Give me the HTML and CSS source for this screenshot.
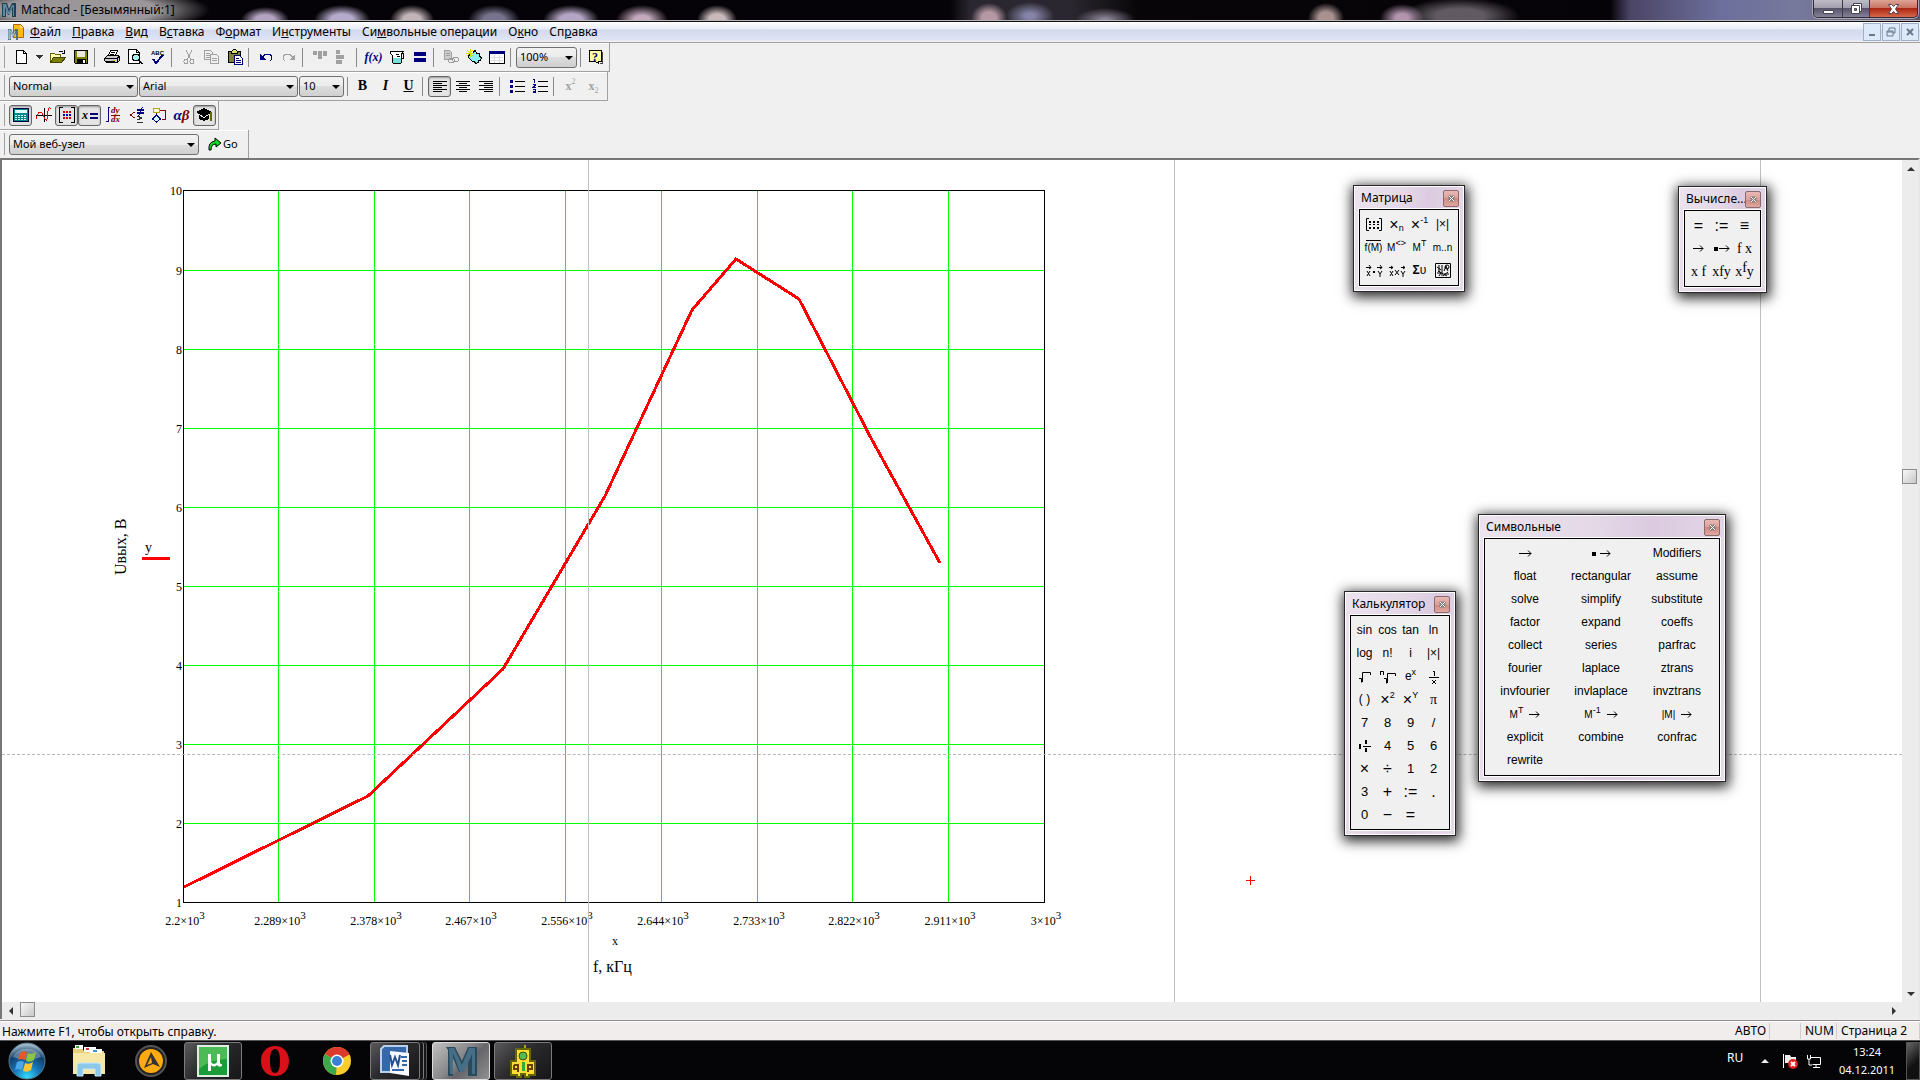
FILE: index.html
```html
<!DOCTYPE html>
<html lang="ru">
<head>
<meta charset="utf-8">
<title>Mathcad - [Безымянный:1]</title>
<link rel="stylesheet" href="styles.css">
</head>
<body>
<header class="titlebar">
  <svg class="app-icon" width="16" height="16" viewBox="0 0 16 16"><path d="M1 1h5l2 6 3-6h4v14h-4V7l-3 6H7L5 7v8H1z" fill="#1d3f52"/><path d="M2 2h3l3 8 3-7h2v11h-1V4l-3 8H7L4 5v9H2z" fill="#5d8ba4"/></svg>
  <h1 class="title">Mathcad - [Безымянный:1]</h1>
  <div class="win-controls">
    <button class="wc wc-min" aria-label="Свернуть"><svg width="13" height="12"><path d="M1.500 7.500h10v3h-10z" fill="#fff" stroke="#445"/></svg></button>
    <button class="wc wc-max" aria-label="Развернуть"><svg width="13" height="13"><path d="M3.500 1.500h8v8h-8z" fill="#fff" stroke="#445"/><path d="M1.500 3.500h8v8h-8z" fill="#fff" stroke="#445"/><path d="M4.500 6.500h2v2h-2z" fill="#889" stroke="#445"/></svg></button>
    <button class="wc wc-close" aria-label="Закрыть"><svg width="13" height="12"><path d="M1.500 1.500h3l2 2 2-2h3l-3 4.500 3 4.500h-3l-2-2-2 2h-3l3-4.500z" fill="#fff" stroke="#545"/></svg></button>
  </div>
</header>

<nav class="menubar">
  <svg class="doc-icon" width="16" height="16" viewBox="0 0 16 16"><path d="M5.500.5h7l3 3v10h-10z" fill="#fb1" stroke="#a60"/><path d="M12 1v3h3" fill="#ffe9a0"/><path d="M0 5h3l2 4 2-4h3v11H8V9l-3 5-2-5v7H0z" fill="#4d7186"/><path d="M1 6l1 0v9H1zM3 7l2 5 2-5" stroke="#b5cad6" fill="none"/></svg>
  <button><u>Ф</u>айл</button>
  <button><u>П</u>равка</button>
  <button><u>В</u>ид</button>
  <button>В<u>с</u>тавка</button>
  <button>Ф<u>о</u>рмат</button>
  <button>И<u>н</u>струменты</button>
  <button>Си<u>м</u>вольные операции</button>
  <button>О<u>к</u>но</button>
  <button>Сп<u>р</u>авка</button>
  <div class="mdi-controls">
    <button aria-label="Свернуть документ"><svg width="10" height="10"><path d="M2 7h6v2H2z" fill="#66788c"/></svg></button>
    <button aria-label="Восстановить документ"><svg width="10" height="10"><path d="M3 4V1h6v5H7M1 4h6v5H1zM1 5h6" fill="none" stroke="#66788c"/></svg></button>
    <button aria-label="Закрыть документ"><svg width="10" height="10"><path d="M2 2l6 6M8 2l-6 6" stroke="#66788c" stroke-width="2"/></svg></button>
  </div>
</nav>

<div class="bars">
<div class="bar bar-standard">
  <button class="tb" aria-label="Создать"><svg width="16" height="16"><path d="M3.500 1.500h7l3 3v10h-10z" fill="#fff" stroke="#000"/><path d="M10.500 1.500v3h3" fill="none" stroke="#000"/></svg></button>
  <button class="tb tb-drop" aria-label="Шаблоны"><svg width="8" height="5"><path d="M0 0h8L4 4z" fill="#333"/></svg></button>
  <button class="tb" aria-label="Открыть"><svg width="16" height="16"><path d="M.5 13.500v-9h4l1 1h5v3" fill="#ffffb0" stroke="#660"/><path d="M.5 13.500l3-5h12l-4 5z" fill="#808000" stroke="#440"/><path d="M8.500 3.500q3-3 5 0M14.500 1v3h-3" fill="none" stroke="#000"/></svg></button>
  <button class="tb" aria-label="Сохранить"><svg width="16" height="16"><path d="M1.500 1.500h13v13h-12l-1-1z" fill="#808000" stroke="#000"/><path d="M4 2h8v6H4z" fill="#e8e8e0"/><path d="M4 10h9v5H4z" fill="#000"/><path d="M10 11h2v3h-2z" fill="#fff"/></svg></button>
  <i class="sep"></i>
  <button class="tb" aria-label="Печать"><svg width="16" height="16"><path d="M4.500 6.500l2-5h7l-2 5" fill="#fff" stroke="#000"/><path d="M.5 9.500l3-3h11l1 1v4l-2 2h-11l-2-2z" fill="#ccc" stroke="#000"/><path d="M1 9.500h12l2-2M13 10v3M7 3.500h4M6 5h4M2 12h9" fill="none" stroke="#000"/><path d="M9 11h2v1H9z" fill="#cc0"/></svg></button>
  <button class="tb" aria-label="Просмотр"><svg width="16" height="16"><path d="M1.500.5h8l3 3v11h-11z" fill="#fff" stroke="#000"/><path d="M9.500.5v3h3" fill="none" stroke="#000"/><circle cx="9" cy="8.500" r="3.500" fill="#aee" stroke="#000"/><path d="M11.500 11l4 4" stroke="#000" stroke-width="2"/></svg></button>
  <button class="tb" aria-label="Орфография"><svg width="16" height="16"><text x="1" y="6" class="abc">ABC</text><path d="M3 10l3 4 7-8" fill="none" stroke="#000080" stroke-width="2"/></svg></button>
  <i class="sep"></i>
  <button class="tb" aria-label="Вырезать" disabled><svg width="16" height="16"><path d="M5 1l5 10M11 1L6 11" stroke="#a0a0a0"/><circle cx="5" cy="12.500" r="2" fill="none" stroke="#a0a0a0"/><circle cx="11" cy="12.500" r="2" fill="none" stroke="#a0a0a0"/></svg></button>
  <button class="tb" aria-label="Копировать" disabled><svg width="16" height="16"><path d="M.5 1.500h6l2 2v7h-8zM2 4.500h4M2 6.500h4M2 8.500h4" fill="none" stroke="#a0a0a0"/><path d="M6.500 5.500h6l2 2v7h-8zM8 9.500h5M8 11.500h5" fill="#f0f0f0" stroke="#a0a0a0"/></svg></button>
  <button class="tb" aria-label="Вставить"><svg width="16" height="16"><path d="M1.500 2.500h12v11h-12z" fill="#808040" stroke="#000"/><path d="M4.500 4.500v-2l2-2h2l2 2v2z" fill="#dd6" stroke="#000"/><path d="M7.500 6.500h5l3 3v6h-8z" fill="#fff" stroke="#000080"/><path d="M9 9.500h3M9 11.500h5M9 13.500h5" stroke="#000080"/></svg></button>
  <i class="sep"></i>
  <button class="tb" aria-label="Отменить"><svg width="16" height="16"><path d="M4 9q2-4 6-4t4 5l-2 2" fill="none" stroke="#000080" stroke-width="1"/><path d="M2 5v6h6z" fill="#000080"/></svg></button>
  <button class="tb" aria-label="Повторить" disabled><svg width="16" height="16"><path d="M12 9q-2-4-6-4t-4 5l2 2" fill="none" stroke="#a0a0a0"/><path d="M14 5v6H8z" fill="#a0a0a0"/></svg></button>
  <i class="sep"></i>
  <button class="tb" aria-label="Выровнять по горизонтали" disabled><svg width="16" height="16"><path d="M1 2h4v4H1zM6 2h4v8H6zM11 2h4v5h-4z" fill="#a0a0a0"/></svg></button>
  <button class="tb" aria-label="Выровнять по вертикали" disabled><svg width="16" height="16"><path d="M1 1h4v4H1zM1 6h8v4H1zM1 11h6v4H1z" fill="#a0a0a0"/></svg></button>
  <i class="sep"></i>
  <button class="tb fx" aria-label="Вставить функцию">f(x)</button>
  <button class="tb" aria-label="Вставить единицы"><svg width="16" height="16"><path d="M1.500 2.500h13l-2 3v8l-2 1h-6l-1-1v-7l-2-2z" fill="#fff" stroke="#000"/><path d="M4 9h8v5H4z" fill="#7dd"/><path d="M7 5.500h3M8 7.500h3M12 4.500h2v5h-2" fill="none" stroke="#000"/></svg></button>
  <button class="tb" aria-label="Вычислить"><svg width="16" height="16"><path d="M2 3h12v4H2zM2 9h12v4H2z" fill="#000080"/></svg></button>
  <i class="sep"></i>
  <button class="tb" aria-label="Гиперссылка" disabled><svg width="16" height="16"><path d="M1.500 1.500h5l2 2v7h-7zM3 4.500h4M3 6.500h4" fill="#ccc" stroke="#a0a0a0"/><rect x="5.500" y="9.500" width="6" height="4" rx="2" fill="none" stroke="#999" /><rect x="9.500" y="8.500" width="6" height="4" rx="2" fill="none" stroke="#999"/></svg></button>
  <button class="tb" aria-label="Компонент"><svg width="16" height="16"><path d="M3.500 4.500h4v-2l2-1 1 3h3v3l2 1-1 3h-2v2l-3 1-1-2h-2l-4-4z" fill="#8ee" stroke="#000"/><path d="M1 1l6 6M4.500 0v8M0 4.500h8M7 1L1 7" stroke="#dd0" stroke-width="1"/></svg></button>
  <button class="tb" aria-label="Ресурсы"><svg width="16" height="16"><path d="M.5 2.500h15v12H.5z" fill="#fff" stroke="#000"/><path d="M0 2h16v3H0z" fill="#000080"/><path d="M5.500 6v8M10.500 6v8M2 8.500h12M2 11.500h12" stroke="#ddd"/></svg></button>
  <i class="sep"></i>
  <label class="combo combo-zoom"><select aria-label="Масштаб"><option>100%</option></select></label>
  <i class="sep sep-thin"></i>
  <button class="tb" aria-label="Справка"><svg width="16" height="16"><path d="M1.500 1.500h12v11h-3v2l-3-2h-6z" fill="#ffffa0" stroke="#000"/><path d="M14.500 3v11h-3" fill="none" stroke="#444"/><text x="4" y="12" class="qm">?</text></svg></button>
</div>

<div class="bar bar-format">
  <label class="combo combo-style"><select aria-label="Стиль"><option>Normal</option></select></label>
  <label class="combo combo-font"><select aria-label="Шрифт"><option>Arial</option></select></label>
  <label class="combo combo-size"><select aria-label="Размер"><option>10</option></select></label>
  <i class="sep sep-thin"></i>
  <button class="tb letter"><b>B</b></button>
  <button class="tb letter"><em>I</em></button>
  <button class="tb letter"><u>U</u></button>
  <i class="sep"></i>
  <button class="tb pressed" aria-label="По левому краю"><svg width="16" height="14"><path d="M1 2.500h14M1 4.500h9M1 6.500h14M1 8.500h9M1 10.500h14M1 12.500h9" stroke="#000"/></svg></button>
  <button class="tb" aria-label="По центру"><svg width="16" height="14"><path d="M1 2.500h14M4 4.500h8M1 6.500h14M4 8.500h8M1 10.500h14M4 12.500h8" stroke="#000"/></svg></button>
  <button class="tb" aria-label="По правому краю"><svg width="16" height="14"><path d="M1 2.500h14M6 4.500h9M1 6.500h14M6 8.500h9M1 10.500h14M6 12.500h9" stroke="#000"/></svg></button>
  <i class="sep"></i>
  <button class="tb" aria-label="Маркеры"><svg width="16" height="14"><path d="M1 1h3v3H1zM1 6h3v3H1zM1 11h3v3H1z" fill="#000080"/><path d="M6 2.500h10M6 7.500h10M6 12.500h10" stroke="#000"/></svg></button>
  <button class="tb" aria-label="Нумерация"><svg width="16" height="14"><path d="M1 .5h1.500v3.500M1 5.500h2v1L1 8.500h2.500M1 10.500h2v3H1M1 12h2" fill="none" stroke="#000080"/><path d="M6 2.500h10M6 7.500h10M6 12.500h10" stroke="#000"/></svg></button>
  <i class="sep"></i>
  <button class="tb script" disabled><b>x</b><sup>2</sup></button>
  <button class="tb script" disabled><b>x</b><sub>2</sub></button>
</div>

<div class="bar bar-math">
  <button class="tb pressed" aria-label="Калькулятор"><svg width="16" height="16"><path d="M.5 1.500h15v13H.5z" fill="#088" stroke="#000040"/><path d="M2 3h12v3H2z" fill="#dff"/><path d="M2 8.500h12M2 10.500h12M2 12.500h12" stroke="#cff" stroke-dasharray="2 1"/></svg></button>
  <button class="tb" aria-label="График"><svg width="16" height="16"><path d="M0 8.500h16M8.500 1v14" stroke="#000"/><path d="M0 12q2-7 4-7t4 5 3 2 1-8 3-2" fill="none" stroke="#e00"/></svg></button>
  <button class="tb pressed" aria-label="Матрица"><svg width="16" height="16"><path d="M4 .5H.5v15H4M12 .5h3.500v15H12" fill="none" stroke="#000"/><path d="M4 4h2v2H4zM7 4h2v2H7zM10 4h2v2h-2zM4 10h2v2H4zM7 10h2v2H7zM10 10h2v2h-2z" fill="#c00"/><path d="M4 7h2v2H4zM7 7h2v2H7zM10 7h2v2h-2z" fill="#00a"/></svg></button>
  <button class="tb pressed" aria-label="Вычисление"><svg width="16" height="16"><text x="0" y="12" class="xeq">x</text><path d="M8 6h8v2H8zM8 10h8v2H8z" fill="#000080"/></svg></button>
  <button class="tb" aria-label="Матанализ"><svg width="16" height="16"><path d="M5 .5H3.500v14H1" fill="none" stroke="#000080" stroke-width="1"/><path d="M6 8.500h9" stroke="#800000"/><text x="6" y="6" class="dy">dy</text><text x="6" y="15" class="dy">dx</text></svg></button>
  <button class="tb" aria-label="Булева"><svg width="16" height="16"><path d="M7 5L2 8l5 3" fill="none" stroke="#800000" stroke-width="1"/><path d="M9 2h7v2H9zM9 5h7v2H9zM14 0h1l-4 9h-1z" fill="#000080"/><path d="M9 9l5 2-5 2M9 15.500h6" fill="none" stroke="#333"/></svg></button>
  <button class="tb" aria-label="Программирование"><svg width="16" height="16"><path d="M2.500 1.500h6v4h-6z" fill="#ffc" stroke="#aa0"/><path d="M5.500 6v3M9 3.500h5.500v9H11" fill="none" stroke="#800000"/><path d="M5.500 8l4 4-4 3-4-3z" fill="#cff" stroke="#008"/></svg></button>
  <button class="tb greek" aria-label="Греческие"><span class="alpha">α</span><span class="beta">β</span></button>
  <button class="tb pressed" aria-label="Символьные"><svg width="18" height="16"><path d="M0 5l8-4 8 4-8 5z" fill="#000"/><path d="M3 8l5 3 5-3v4l-5 2-5-2z" fill="#000"/><path d="M14.500 5v9" stroke="#660" stroke-width="2"/></svg></button>
</div>

<div class="bar bar-web">
  <label class="combo combo-url"><select aria-label="Адрес"><option>Мой веб-узел</option></select></label>
  <button class="go"><svg width="14" height="14"><path d="M1 13q-1-8 6-9V1l6 5-5 4V7Q3 7 3 13z" fill="#1d2" stroke="#000"/></svg>Go</button>
</div>
</div>

<main class="work">
  <section class="canvas">
    <svg class="chart" width="1070" height="830" viewBox="2 160 1070 830">
      <g class="grid">
        <path d="M278.500 191v711M374.500 191v711M469.500 191v711M565.500 191v711M661.500 191v711M757.500 191v711M852.500 191v711M948.500 191v711"/>
        <path d="M184 270.500h860M184 349.500h860M184 428.500h860M184 507.500h860M184 586.500h860M184 665.500h860M184 744.500h860M184 823.500h860"/>
      </g>
      <rect class="frame" x="183.500" y="190.500" width="861" height="712"/>
      <polyline class="curve" points="184,887 368,796 503,669 605,496 692,310 736,259 799,299 872,440 940,563"/>
      <g class="ticks-y">
        <text x="182" y="195">10</text><text x="182" y="275">9</text><text x="182" y="354">8</text><text x="182" y="433">7</text><text x="182" y="512">6</text><text x="182" y="591">5</text><text x="182" y="670">4</text><text x="182" y="749">3</text><text x="182" y="828">2</text><text x="182" y="907">1</text>
      </g>
      <g class="ticks-x">
        <text x="185" y="925">2.2×10<tspan dy="-6">3</tspan></text>
        <text x="280" y="925">2.289×10<tspan dy="-6">3</tspan></text>
        <text x="376" y="925">2.378×10<tspan dy="-6">3</tspan></text>
        <text x="471" y="925">2.467×10<tspan dy="-6">3</tspan></text>
        <text x="567" y="925">2.556×10<tspan dy="-6">3</tspan></text>
        <text x="663" y="925">2.644×10<tspan dy="-6">3</tspan></text>
        <text x="759" y="925">2.733×10<tspan dy="-6">3</tspan></text>
        <text x="854" y="925">2.822×10<tspan dy="-6">3</tspan></text>
        <text x="950" y="925">2.911×10<tspan dy="-6">3</tspan></text>
        <text x="1046" y="925">3×10<tspan dy="-6">3</tspan></text>
        <text x="615" y="945">x</text>
      </g>
      <text class="axis" x="593" y="972">f, кГц</text>
      <text class="axis" transform="translate(126 575) rotate(-90)">Uвых, В</text>
      <text class="axis-var" x="145" y="552">y</text>
      <path class="legend" d="M142 558.500h28"/>
    </svg>
    <i class="vline vline-a"></i><i class="vline vline-b"></i><i class="vline vline-c"></i>
    <i class="hline"></i>
    <svg class="cursor" width="9" height="9"><path d="M4.500 0v9M0 4.500h9" stroke="#f00"/></svg>

    <section class="palette p-matrix">
      <header><h2>Матрица</h2><button class="x" aria-label="Закрыть"><svg width="7" height="7"><path d="M1 1l5 5M6 1L1 6" stroke="#777" stroke-width="3"/><path d="M1 1l5 5M6 1L1 6" stroke="#fff"/></svg></button></header>
      <div class="keys four">
        <button aria-label="Матрица или вектор"><svg width="16" height="16"><path d="M3 1.500H.5v12H3M13 1.500h2.500v12H13" fill="none" stroke="#000"/><path d="M3 4h2v2H3zM7 4h2v2H7zM11 4h2v2h-2zM3 7h2v1H3zM7 7h2v1H7zM11 7h2v1h-2zM3 10h2v2H3zM7 10h2v2H7zM11 10h2v2h-2z"/></svg></button>
        <button><span class="op">×</span><sub>n</sub></button>
        <button><span class="op">×</span><sup>-1</sup></button>
        <button>|×|</button>
        <button class="vec">f(M)</button>
        <button class="small">M<sup>&lt;&gt;</sup></button>
        <button class="small">M<sup>T</sup></button>
        <button class="small">m..n</button>
        <button aria-label="Скалярное произведение"><svg width="16" height="12"><path d="M0 2.500h5M3 0l2 2.500L3 4M1 6l3 5M4 6l-3 5M11 2.500h5M14 0l2 2.500L14 4M12 6l2 3 2-3M14 9v3" fill="none" stroke="#000"/><path d="M7 6h2v2H7z"/></svg></button>
        <button aria-label="Векторное произведение"><svg width="16" height="12"><path d="M0 2.500h4M2 1l2 1.500L2 4M1 6l3 5M4 6l-3 5M6 5l4 5M10 5l-4 5M12 2.500h4M14 1l2 1.500L14 4M12 6l2 3 2-3M14 9v3" fill="none" stroke="#000"/></svg></button>
        <button><b>Σ</b>υ</button>
        <button aria-label="Рисунок"><svg width="16" height="16"><path d="M.5.500h15v14H.5z" fill="none" stroke="#000"/><path d="M4 2v7M2 4l4 3M7 2v11M2 10h4l-2 3M9 8l2-5 2 5M9 11h5M8 13l5-4M3 8l9 5" fill="none" stroke="#000"/><circle cx="12" cy="4" r="2" fill="none" stroke="#000"/></svg></button>
      </div>
    </section>

    <section class="palette p-eval">
      <header><h2>Вычисле...</h2><button class="x" aria-label="Закрыть"><svg width="7" height="7"><path d="M1 1l5 5M6 1L1 6" stroke="#777" stroke-width="3"/><path d="M1 1l5 5M6 1L1 6" stroke="#fff"/></svg></button></header>
      <div class="keys three">
        <button class="op">=</button><button class="op">:=</button><button class="op">≡</button>
        <button aria-label="Символьно"><svg class="arrow" width="11" height="7"><path d="M0 3.500h10M7 .5l3 3-3 3"/></svg></button>
        <button aria-label="Символьно с ключом"><svg class="arrow" width="16" height="7"><path d="M4 2v4H0V2z" class="dot"/><path d="M5 3.500h10M12 .5l3 3-3 3"/></svg></button>
        <button class="serif">f x</button>
        <button class="serif">x f</button><button class="serif">xfy</button><button class="serif">x<sup>f</sup>y</button>
      </div>
    </section>

    <section class="palette p-calc">
      <header><h2>Калькулятор</h2><button class="x" aria-label="Закрыть"><svg width="7" height="7"><path d="M1 1l5 5M6 1L1 6" stroke="#777" stroke-width="3"/><path d="M1 1l5 5M6 1L1 6" stroke="#fff"/></svg></button></header>
      <div class="keys four">
        <button>sin</button><button>cos</button><button>tan</button><button>ln</button>
        <button>log</button><button>n!</button><button>i</button><button>|×|</button>
        <button aria-label="Корень"><svg width="12" height="12"><path d="M0 7.500h2.500v4M3.500 11V1.500h8V4" fill="none" stroke="#000"/></svg></button>
        <button aria-label="Корень степени n"><svg width="16" height="14"><path d="M.5 5V1M1 1.500h2.500V5M4 8.500h2.500v5M7.500 13V3.500h8V6" fill="none" stroke="#000"/></svg></button>
        <button>e<sup>x</sup></button>
        <button aria-label="Обратное"><svg width="10" height="16"><path d="M0 8.500h10M4 2.500h1.500V7M3 11l4 4M7 11l-4 4" fill="none" stroke="#000"/></svg></button>
        <button>( )</button><button><span class="op">×</span><sup>2</sup></button><button><span class="op">×</span><sup>Y</sup></button><button class="serif">π</button>
        <button class="digit">7</button><button class="digit">8</button><button class="digit">9</button><button class="digit">/</button>
        <button aria-label="Смешанное число"><svg width="12" height="14"><path d="M0 5h2v5H0zM6 1h2v4H6zM6 9h2v4H6z"/><path d="M4 7.500h8" stroke="#000"/></svg></button><button class="digit">4</button><button class="digit">5</button><button class="digit">6</button>
        <button class="op">×</button><button class="op">÷</button><button class="digit">1</button><button class="digit">2</button>
        <button class="digit">3</button><button class="op">+</button><button class="op">:=</button><button class="op">.</button>
        <button class="digit">0</button><button class="op">−</button><button class="op">=</button>
      </div>
    </section>

    <section class="palette p-symbolic">
      <header><h2>Символьные</h2><button class="x" aria-label="Закрыть"><svg width="7" height="7"><path d="M1 1l5 5M6 1L1 6" stroke="#777" stroke-width="3"/><path d="M1 1l5 5M6 1L1 6" stroke="#fff"/></svg></button></header>
      <div class="keys wide">
        <button aria-label="Символьно"><svg class="arrow" width="13" height="7"><path d="M0 3.500h12M9 .5l3 3-3 3"/></svg></button>
        <button aria-label="Символьно с ключом"><svg class="arrow" width="19" height="7"><path d="M4 2v4H0V2z" class="dot"/><path d="M8 3.500h10M15 .5l3 3-3 3"/></svg></button>
        <button>Modifiers</button>
        <button>float</button><button>rectangular</button><button>assume</button>
        <button>solve</button><button>simplify</button><button>substitute</button>
        <button>factor</button><button>expand</button><button>coeffs</button>
        <button>collect</button><button>series</button><button>parfrac</button>
        <button>fourier</button><button>laplace</button><button>ztrans</button>
        <button>invfourier</button><button>invlaplace</button><button>invztrans</button>
        <button class="small">M<sup>T</sup><svg class="arrow gap" width="11" height="7"><path d="M0 3.500h10M7 .5l3 3-3 3"/></svg></button>
        <button class="small">M<sup>-1</sup><svg class="arrow gap" width="11" height="7"><path d="M0 3.500h10M7 .5l3 3-3 3"/></svg></button>
        <button class="small">|M|<svg class="arrow gap" width="11" height="7"><path d="M0 3.500h10M7 .5l3 3-3 3"/></svg></button>
        <button>explicit</button><button>combine</button><button>confrac</button>
        <button>rewrite</button>
      </div>
    </section>
  </section>
  <div class="vscroll">
    <button aria-label="Вверх"><svg width="8" height="4"><path d="M0 4l4-4 4 4z" fill="#333"/></svg></button>
    <i class="before"></i><i class="thumb"></i><i class="after"></i>
    <button aria-label="Вниз"><svg width="8" height="4"><path d="M0 0l4 4 4-4z" fill="#333"/></svg></button>
  </div>
  <div class="hscroll">
    <button aria-label="Влево"><svg width="4" height="8"><path d="M4 0L0 4l4 4z" fill="#333"/></svg></button>
    <i class="thumb"></i><i class="after"></i>
    <button aria-label="Вправо"><svg width="4" height="8"><path d="M0 0l4 4-4 4z" fill="#333"/></svg></button>
  </div>
  <i class="corner"></i>
</main>

<footer class="status">
  <span class="hint">Нажмите F1, чтобы открыть справку.</span>
  <span class="cell cell-auto">АВТО</span><span class="cell cell-caps"></span><span class="cell cell-num">NUM</span><span class="cell cell-page">Страница 2</span>
</footer>

<div class="taskbar">
  <button class="start" aria-label="Пуск"><svg width="38" height="38" viewBox="0 0 38 38"><defs><radialGradient id="orb" cx=".5" cy=".95" r=".9"><stop offset="0" stop-color="#3df"/><stop offset=".4" stop-color="#1676b8"/><stop offset=".75" stop-color="#12406c"/><stop offset="1" stop-color="#9fb8c8"/></radialGradient></defs><circle cx="19" cy="19" r="18" fill="url(#orb)" stroke="#5b7b90"/><path d="M5 15a15 13 0 0 1 28 0q-14 5-28 0z" fill="#fff" opacity=".3"/><path d="M12 11q4-3 7-1l-2 8q-4-2-7 0z" fill="#e8572a"/><path d="M20 11q4 2 8-1l-2 8q-4 3-8 1z" fill="#8cc63e"/><path d="M9 20q4-2 7 0l-2 8q-4-2-7 0z" fill="#4aa8e8"/><path d="M17 21q4 2 8-1l-2 8q-4 3-8 1z" fill="#fdc52e"/></svg></button>
  <button class="task" aria-label="Проводник"><svg width="34" height="34"><path d="M1 4h9l2 3h20v23H1z" fill="#e7cf7a"/><path d="M3 1h8v4H3zM12 3h12v5H12zM18 5h12v5H18z" fill="#fff"/><path d="M4 2h3v2H4z" fill="#3a3"/><path d="M14 4h3v2h-3z" fill="#d33"/><path d="M21 6h4v2h-4z" fill="#39c"/><path d="M1 9h32v21H1z" fill="#f6e7a6"/><path d="M5 32V22q0-3 3-3h18q3 0 3 3v10h-6v-7H11v7z" fill="#8cc8e8" stroke="#c8e8f8"/></svg></button>
  <button class="task" aria-label="AIMP"><svg width="34" height="34"><circle cx="17" cy="17" r="15" fill="#222" stroke="#555" stroke-width="2"/><circle cx="17" cy="17" r="12" fill="#fa1"/><path d="M17 8l9 15-7-3-9 4zM17 13l-4 8 5-2z" fill="#333" fill-rule="evenodd"/></svg></button>
  <button class="task open" aria-label="µTorrent"><svg width="32" height="32"><path d="M1 1h30v30H1z" fill="#1a9c38" stroke="#dfeee2" stroke-width="2"/><path d="M2 2h28v12Q14 14 2 24z" fill="#4cba55"/><path d="M11 26V9h3v8q3 4 6 0V9h3v9q1 2 2 1v2q-3 2-5-1-3 3-6 0v6z" fill="#fff"/></svg></button>
  <button class="task" aria-label="Opera"><svg width="30" height="32"><path d="M15 1c8 0 14 6 14 15s-6 15-14 15S1 25 1 16 7 1 15 1zm0 3c-4 0-5 6-5 12s1 12 5 12 5-6 5-12-1-12-5-12z" fill="#d8101a" fill-rule="evenodd"/></svg></button>
  <button class="task" aria-label="Chrome"><svg width="28" height="28"><circle cx="14" cy="14" r="14" fill="#f9ce2c"/><path d="M14 14L2 7a14 14 0 0 1 24.500 0.500z" fill="#dc3a2c"/><path d="M14 14L2 7a14 14 0 0 0 11 21z" fill="#3ba94c"/><path d="M14 7h12.500L25 5 14 6z" fill="#dc3a2c"/><circle cx="14" cy="14" r="6.500" fill="#fff"/><circle cx="14" cy="14" r="5" fill="#3b7fd6"/></svg></button>
  <button class="task open stack" aria-label="Word"><svg width="30" height="32"><path d="M4 1h23v26H1V4z" fill="#3568a8" stroke="#b8d0ee" stroke-width="2"/><path d="M10 6l19 2v23l-19-3z" fill="#f6f9fd"/><path d="M21 12h6M22 16h5M22 20h5M12 25h12" stroke="#3568a8" stroke-width="2"/><path d="M10 10l2 10 3-8 3 8 2-10" fill="none" stroke="#234f91" stroke-width="2"/></svg></button>
  <button class="task open active" aria-label="Mathcad"><svg width="34" height="32"><path d="M2 2h9l7 14 6-14h9v29h-9V13l-5 14h-4l-6-14v18H4V5z" fill="#294a5d"/><path d="M5 3h5l8 17 7-17h6v26h-3V9l-8 18h-4L9 8v21H6z" fill="#466f87"/></svg></button>
  <button class="task open" aria-label="QIP"><svg width="26" height="32"><path d="M15 0v5" stroke="#aa0" stroke-width="2"/><path d="M6 4h14v12h5v14h-6v2h-4v-3h-4v3H7v-2H1V16h5z" fill="#fd3" stroke="#660" stroke-width="2"/><circle cx="13" cy="11" r="4" fill="#5b5" stroke="#350"/><path d="M4 20h4v7M18 27v-7h4v4h-4M4 20v4h3" fill="none" stroke="#640" stroke-width="2"/><path d="M12 17h3v9h-3z" fill="#3a3"/></svg></button>
  <div class="tray">
    <span class="lang">RU</span>
    <button class="up" aria-label="Скрытые значки"><svg width="8" height="4"><path d="M0 4l4-4 4 4z" fill="#eee"/></svg></button>
    <svg class="flag" width="16" height="16"><path d="M1.500 1v14" stroke="#fff"/><path d="M3 2h5l1 2h5v6H3z" fill="#eee"/><circle cx="11" cy="11" r="5" fill="#d22"/><path d="M9 9l4 4M13 9l-4 4" stroke="#fff" stroke-width="2"/></svg>
    <svg class="net" width="16" height="16"><path d="M4.500 4.500h10v7h-8M7 14.500h7M10 12v2M1.500 2v4h3V2M3 6v6h3" fill="none" stroke="#fff"/></svg>
    <div class="clock"><span>13:24</span><span>04.12.2011</span></div>
    <button class="desktop" aria-label="Свернуть все окна"></button>
  </div>
</div>
</body>
</html>
```
FILE: styles.css
```css
* { box-sizing: border-box; }
body {
  margin: 0;
  height: 100vh;
  display: flex;
  flex-direction: column;
  overflow: hidden;
  background: #f0f0f0;
  color: #000;
  font: 12px/16px "Noto Sans", "Open Sans", sans-serif;
}
button {
  margin: 0;
  padding: 0;
  border: 0;
  background: none;
  color: inherit;
  font: inherit;
}
svg { display: block; flex: none; overflow: visible; }
h1, h2 { margin: 0; font: inherit; }

/* window title */
.titlebar {
  flex: none;
  height: 22px;
  display: flex;
  align-items: center;
  gap: 4px;
  padding: 0 2px 2px 0;
  border-bottom: 1px solid #111;
  box-shadow: inset 0 -1px #b9b3bb;
  background:
    radial-gradient(ellipse 130px 24px at 80px 10px, #9a969a 60%, transparent 100%),
    radial-gradient(ellipse 24px 13px at 265px 20px, #b3a3c0 40%, transparent 100%),
    radial-gradient(ellipse 28px 15px at 342px 20px, #b5aacb 40%, transparent 100%),
    radial-gradient(ellipse 22px 15px at 412px 20px, #c3b4b8 40%, transparent 100%),
    radial-gradient(ellipse 26px 15px at 494px 20px, #77738d 40%, transparent 100%),
    radial-gradient(ellipse 28px 15px at 571px 20px, #b5a5c4 40%, transparent 100%),
    radial-gradient(ellipse 26px 15px at 642px 20px, #c5a9bd 30%, transparent 100%),
    radial-gradient(ellipse 20px 15px at 717px 20px, #c9b9ba 40%, transparent 100%),
    radial-gradient(ellipse 18px 15px at 989px 18px, #b498a4 40%, transparent 100%),
    radial-gradient(ellipse 24px 14px at 1030px 16px, #8584a8 20%, transparent 100%),
    radial-gradient(ellipse 30px 12px at 1105px 20px, #8e8699 10%, transparent 100%),
    radial-gradient(ellipse 18px 15px at 1326px 18px, #a8918f 40%, transparent 100%),
    radial-gradient(ellipse 22px 14px at 1402px 18px, #b294ae 30%, transparent 100%),
    radial-gradient(ellipse 60px 18px at 1460px 16px, #625a63 40%, transparent 100%),
    linear-gradient(90deg, #050307 950px, #2b2730 970px, #2b2730 1070px, #080508 1140px, #050307 1610px, #4b4566 1630px, #6c6f9b 1720px, #77799c 1800px, #5a526a);
}
.app-icon { margin-left: 1px; }
.title { flex: 1; white-space: nowrap; }
.win-controls {
  align-self: flex-start;
  display: flex;
  height: 18px;
  border: 1px solid #2e2a38;
  border-top: 0;
  border-radius: 0 0 5px 5px;
  overflow: hidden;
  box-shadow: 0 0 0 1px #aaa6b3;
}
.wc {
  display: flex;
  align-items: center;
  justify-content: center;
  background: linear-gradient(#c0bcc6, #a29ead 45%, #575368 50%, #858197);
}
.wc-min { width: 28px; }
.wc-max { width: 28px; border: solid #3c3848; border-width: 0 1px; }
.wc-close { width: 47px; background: linear-gradient(#dfa497, #c87563 45%, #ab2713 50%, #d8674a); }

/* menu */
.menubar {
  flex: none;
  height: 21px;
  display: flex;
  align-items: center;
  gap: 11px;
  padding: 0 1px 0 8px;
  border-bottom: 1px solid #a0a0a0;
  background: linear-gradient(#fff, #e8ecf6 35%, #d3daed 40%, #dfe5f6 90%, #f0f0f0 96%);
  white-space: nowrap;
}
.doc-icon { margin-right: -5px; }
.mdi-controls { margin-left: auto; display: flex; gap: 1px; }
.mdi-controls button {
  width: 18px;
  height: 18px;
  display: flex;
  align-items: center;
  justify-content: center;
  border: 1px solid #9eb0c6;
  background: #dce9f8;
}

/* toolbars */
.bars { flex: none; display: flex; flex-direction: column; align-items: flex-start; }
.bar {
  height: 29px;
  display: flex;
  align-items: center;
  padding: 0 2px 0 9px;
  border: solid #a0a0a0;
  border-width: 0 1px 1px 0;
  background: linear-gradient(#a0a0a0, #a0a0a0) 4px 3px / 1px 22px no-repeat;
  box-shadow: inset 0 1px #fff;
}
.tb {
  width: 23px;
  height: 21px;
  display: flex;
  align-items: center;
  justify-content: center;
}
.tb svg { shape-rendering: crispEdges; }
.tb-drop { width: 14px; }
.pressed { border: 1px solid #666; border-radius: 3px; background: #e4e4e4; box-shadow: inset 0 1px 2px #999; }
.sep { width: 8px; height: 19px; background: linear-gradient(#8a8a8a, #8a8a8a) 2px 0 / 1px 19px no-repeat; }
.sep-thin { width: 6px; }
.abc { font: bold 6px "Liberation Sans", sans-serif; }
.qm { font: bold 12px "Liberation Serif", serif; fill: #000080; }
.fx { color: #000080; font: italic bold 12px "Liberation Serif", serif; }
.xeq { font: italic bold 12px "Liberation Serif", serif; }
.dy { font: italic bold 9px "Liberation Serif", serif; fill: #800000; }
.greek { font: italic bold 15px "Liberation Serif", serif; }
.alpha { color: #000080; }
.beta { color: #800000; }
.letter { font: bold 14px "Liberation Serif", serif; }
.script { color: #a0a0a0; font: 12px/12px "Liberation Serif", serif; }
.script sup, .script sub { font-size: 8px; line-height: 8px; }
.script sup { align-self: flex-start; margin-top: 2px; }
.script sub { align-self: flex-end; margin-bottom: 2px; }

.combo { position: relative; display: block; height: 21px; margin-right: 1px; }
.combo::after {
  content: "";
  position: absolute;
  right: 4px;
  top: 9px;
  border: solid transparent;
  border-width: 4px 4px 0;
  border-top-color: #000;
  pointer-events: none;
}
.combo select {
  appearance: none;
  width: 100%;
  height: 21px;
  padding: 0 3px;
  border: 1px solid #707070;
  border-radius: 3px;
  background: linear-gradient(#f2f2f2, #ebebeb 50%, #dddddd 50%, #cfcfcf);
  color: #000;
  font: 11px/18px "Noto Sans", "Open Sans", sans-serif;
}
.combo-zoom { width: 61px; }
.combo-style { width: 129px; }
.combo-font { width: 159px; }
.combo-size { width: 45px; }
.combo-url { width: 190px; }
.go { display: flex; align-items: center; gap: 1px; padding: 0 8px; font-size: 11px; }

/* worksheet */
.work {
  flex: 1;
  min-height: 0;
  display: grid;
  grid-template-columns: 1fr 16px;
  grid-template-rows: 1fr 17px;
  margin-top: -1px;
  border: solid #a0a0a0;
  border-width: 2px 2px 0 2px;
  border-top-color: #777;
  border-left-color: #777;
  border-right-color: #e8e8e8;
}
.canvas { position: relative; overflow: hidden; background: #fff; }
.grid { fill: none; stroke: #00ff00; }
.frame { fill: none; stroke: #000; }
.curve { fill: none; stroke: #ff0000; stroke-width: 3; shape-rendering: crispEdges; }
.legend { stroke: #ff0000; stroke-width: 3; }
.ticks-x, .ticks-y { font: 12px "Liberation Serif", serif; }
.ticks-x { text-anchor: middle; }
.ticks-x tspan { font-size: 11px; }
.ticks-y { text-anchor: end; }
.axis { font: 16px "Liberation Serif", serif; }
.axis-var { font: 14px "Liberation Serif", serif; }
.vline { position: absolute; top: 0; bottom: 0; width: 1px; background: #c0c0c0; }
.vline-a { left: 586px; }
.vline-b { left: 1172px; }
.vline-c { left: 1758px; }
.hline { position: absolute; top: 594px; left: 0; right: 0; border-top: 1px dashed #b8b8b8; }
.cursor { position: absolute; left: 1244px; top: 716px; }

.palette {
  position: absolute;
  padding: 0 4px 4px;
  border: 1px solid #2b262e;
  background: linear-gradient(100deg, #ece3ef, #e4d8e7 40%, #dccbe0 60%, #e6dbe9);
  box-shadow: inset 0 0 0 1px #fff, 1px 3px 12px 2px rgba(0, 0, 0, .85);
}
.p-matrix { left: 1351px; top: 25px; }
.p-eval { left: 1676px; top: 26px; }
.p-calc { left: 1342px; top: 431px; }
.p-symbolic { left: 1476px; top: 354px; }
.palette header {
  height: 23px;
  display: flex;
  align-items: center;
  padding: 1px 1px 0 3px;
}
.palette h2 { flex: 1; width: 0; white-space: nowrap; }
.x {
  width: 16px;
  height: 17px;
  display: flex;
  align-items: center;
  justify-content: center;
  border: 1px solid #8b6a70;
  border-radius: 2px;
  background: linear-gradient(#e8b8b5, #dda09a 50%, #cf8880 50%, #e0a8a0);
}
.keys {
  display: grid;
  grid-auto-rows: 23px;
  padding: 3px 4px 3px 2px;
  border: 1px solid #000;
  outline: 1px solid #fff;
  margin: 0 1px 1px;
  background: #f0f0f0;
}
.four { grid-template-columns: repeat(4, 23px); }
.three { grid-template-columns: repeat(3, 23px); }
.wide { grid-template-columns: repeat(3, 76px); }
.keys button {
  display: flex;
  align-items: center;
  justify-content: center;
  font: 12px/23px "Liberation Sans", Arial, sans-serif;
  white-space: nowrap;
}
.keys sup, .keys sub { font-size: 9px; line-height: 9px; }
.keys sup { align-self: flex-start; margin-top: 3px; }
.keys sub { align-self: flex-end; margin-bottom: 3px; }
.keys .digit { font-size: 13px; }
.keys .op { font-size: 16px; }
.keys .small { font-size: 10px; }
.keys .serif { font-family: "Liberation Serif", serif; font-size: 14px; }
.keys .serif sup { font-size: 14px; }
.keys .vec { font-size: 10px; background: linear-gradient(#000, #000) 4px 4px / 15px 1px no-repeat; }
.arrow { fill: none; stroke: #000; }
.arrow .dot { fill: #000; stroke: none; }
.gap { margin-left: 6px; }

/* scroll bars */
.vscroll, .hscroll { display: flex; background: #ececec; }
.vscroll { flex-direction: column; }
.vscroll button, .hscroll button { width: 17px; height: 17px; display: flex; align-items: center; justify-content: center; }
.thumb { width: 15px; height: 15px; border: 1px solid #8c8c8c; background: linear-gradient(135deg, #f8f8f8, #c8c8c8); }
.hscroll .thumb { margin-left: 1px; }
.before { flex: 292; }
.after { flex: 502; }
.corner { background: #ececec; }

/* status bar */
.status {
  flex: none;
  height: 20px;
  display: flex;
  align-items: center;
  margin-top: 1px;
  padding: 2px 0 1px;
  border-top: 1px solid #8e8e8e;
  background: #f0edec;
  box-shadow: inset 0 1px #fff;
  line-height: 15px;
}
.hint { flex: 1; padding-left: 2px; }
.cell { height: 16px; border-right: 1px solid #d0cdcc; }
.cell-auto { width: 38px; padding-left: 3px; }
.cell-caps { width: 31px; }
.cell-num { width: 36px; padding-left: 4px; }
.cell-page { width: 83px; padding-left: 4px; }

/* taskbar */
.taskbar {
  flex: none;
  height: 40px;
  display: flex;
  align-items: center;
  gap: 4px;
  padding-left: 8px;
  border-top: 1px solid #555;
  background: #050406;
  color: #fff;
}
.start { width: 48px; }
.task { width: 58px; height: 38px; display: flex; align-items: center; justify-content: center; }
.open { border: 1px solid #7b7b7d; border-radius: 3px; background: linear-gradient(135deg, #59595b, #2b2b2e 45%, #161618); }
.active { border-color: #ddd; background: linear-gradient(135deg, #c0c0c0, #88888a 45%, #66666a 60%, #909092); }
.stack { width: 50px; margin-right: 8px; box-shadow: 3px 0 #161618, 4px 0 #7b7b7d, 6px 0 #161618, 7px 0 #555; }
.tray { margin-left: auto; height: 100%; display: flex; align-items: center; }
.lang { width: 34px; padding-bottom: 6px; }
.up { width: 8px; margin-right: 13px; }
.flag { margin-right: 8px; }
.clock { display: flex; flex-direction: column; align-items: center; width: 84px; padding-left: 6px; line-height: 18px; font-size: 11px; }
.desktop { width: 14px; height: 38px; border: 1px solid #555; background: linear-gradient(135deg, #666, #111 60%); }
```
